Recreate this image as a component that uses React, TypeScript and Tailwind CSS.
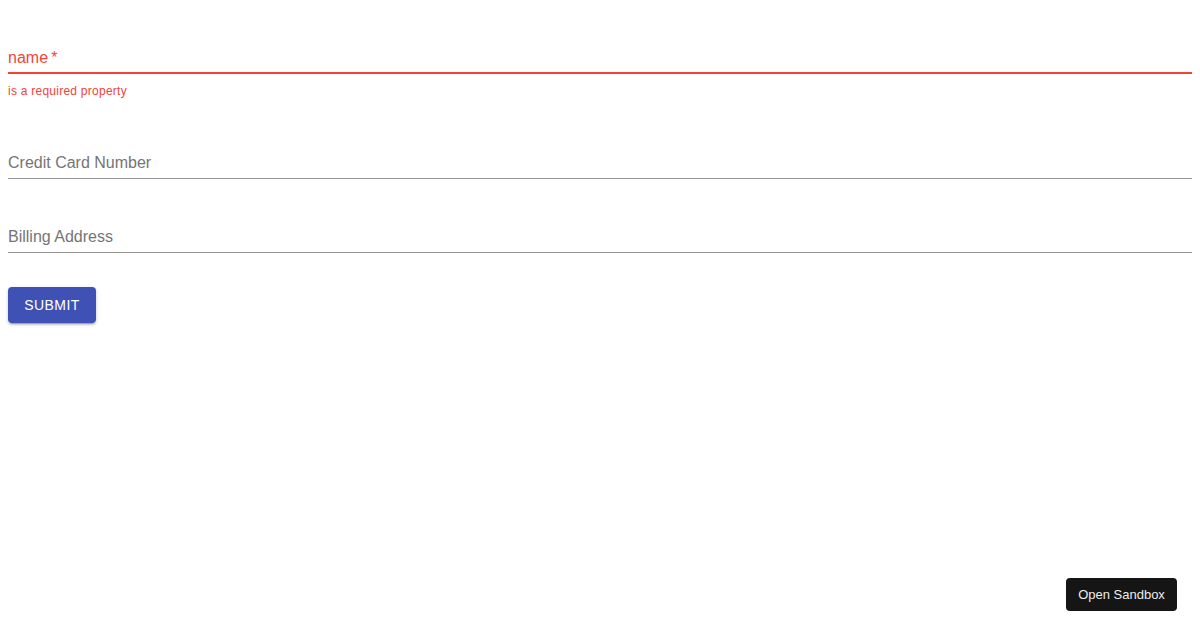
export default function App() {
  return (
    <div className="relative h-[630px] w-[1200px] bg-white px-2 font-['Liberation_Sans',Arial,sans-serif]">
      {/* name field (error state) */}
      <div className="pt-[50px]">
        <div className="border-b-2 border-[#f44336]">
          <div className="pb-[6px] text-base leading-4 text-[#f44336]">
            name<span>&thinsp;*</span>
          </div>
        </div>
        <p className="mt-[8px] text-xs leading-[1.66] tracking-[0.25px] text-[#f44336]">is a required property</p>
      </div>

      <div className="mt-[53px] border-b border-[#949494]">
        <div className="pb-[7px] text-base leading-4 text-[#757575]">Credit Card Number</div>
      </div>

      <div className="mt-[50px] border-b border-[#949494]">
        <div className="pb-[7px] text-base leading-4 text-[#757575]">Billing Address</div>
      </div>

      <button className="mt-[34px] h-9 w-[88px] rounded-[4px] bg-[#3f51b5] text-sm uppercase tracking-[0.4px] text-white shadow-[0_3px_1px_-2px_rgba(0,0,0,0.2),0_2px_2px_0_rgba(0,0,0,0.14),0_1px_5px_0_rgba(0,0,0,0.12)]">
        Submit
      </button>

      <div className="absolute bottom-[19px] right-[23px] flex h-[33px] w-[111px] items-center justify-center rounded-[4px] bg-[#151515] text-[13px] text-[#ececec]">
        Open Sandbox
      </div>
    </div>
  );
}
